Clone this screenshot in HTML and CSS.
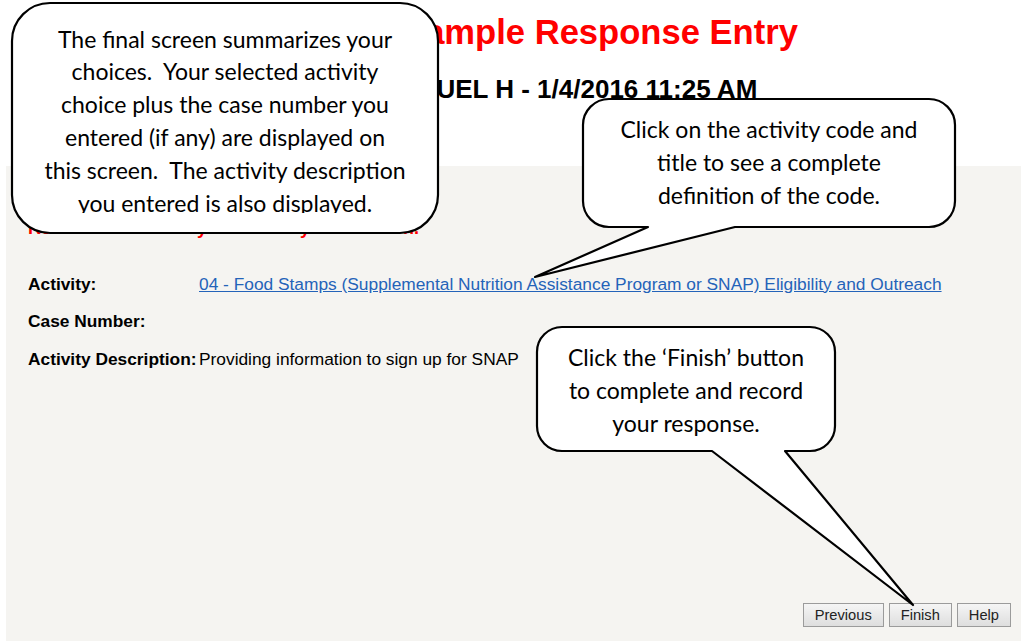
FILE: index.html
```html
<!DOCTYPE html>
<html lang="en">
<head>
<meta charset="utf-8">
<title>Sample Response Entry</title>
<link rel="stylesheet" href="styles.css">
</head>
<body>
<header class="head">
  <h1 class="title">Sample Response Entry</h1>
  <h2 class="sub">SAMUEL H - 1/4/2016 11:25 AM</h2>
</header>
<main class="panel">
  <p class="notice">Review the summary of the entry information.</p>
  <dl class="summary">
    <dt>Activity:</dt>
    <dd><a class="link" href="#">04 - Food Stamps (Supplemental Nutrition Assistance Program or SNAP) Eligibility and Outreach</a></dd>
    <dt>Case Number:</dt>
    <dd></dd>
    <dt>Activity Description:</dt>
    <dd>Providing information to sign up for SNAP</dd>
  </dl>
  <div class="actions">
    <button class="btn" type="button">Previous</button>
    <button class="btn" type="button">Finish</button>
    <button class="btn" type="button">Help</button>
  </div>
</main>

<div class="callout callout-summary">
  <svg class="shape" width="426" height="230" viewBox="0 0 426 230">
    <path d="M38,0 H388 A38,38 0 0 1 426,38 V192 A38,38 0 0 1 388,230 H38 A38,38 0 0 1 0,192 V38 A38,38 0 0 1 38,0 Z"/>
  </svg>
  <div class="callout-text clip">The final screen summarizes your<br>choices.&nbsp; Your selected activity<br>choice plus the case number you<br>entered (if any) are displayed on<br>this screen.&nbsp; The activity description<br>you entered is also displayed.</div>
</div>

<div class="callout callout-code">
  <svg class="shape" width="372" height="128" viewBox="0 0 372 128">
    <path d="M26,0 H346 A26,26 0 0 1 372,26 V102 A26,26 0 0 1 346,128 H152 L-48,178 L65,128 H26 A26,26 0 0 1 0,102 V26 A26,26 0 0 1 26,0 Z"/>
  </svg>
  <div class="callout-text">Click on the activity code and<br>title to see a complete<br>definition of the code.</div>
</div>

<div class="callout callout-finish">
  <svg class="shape" width="298" height="124" viewBox="0 0 298 124">
    <path d="M25,0 H273 A25,25 0 0 1 298,25 V99 A25,25 0 0 1 273,124 H248 L376,278 L175,124 H25 A25,25 0 0 1 0,99 V25 A25,25 0 0 1 25,0 Z"/>
  </svg>
  <div class="callout-text">Click the &lsquo;Finish&rsquo; button<br>to complete and record<br>your response.</div>
</div>
</body>
</html>
```
FILE: styles.css
```css
* { box-sizing: border-box; }
html, body { margin: 0; padding: 0; }
body {
  width: 1023px;
  height: 644px;
  overflow: hidden;
  position: relative;
  background: #ffffff;
  font-family: "Liberation Sans", Arial, sans-serif;
  color: #000;
}
.head { padding-top: 12px; }
.title {
  margin: 0;
  padding-left: 177px;
  text-align: center;
  color: #ff0000;
  font-size: 34.6px;
  line-height: 40px;
  font-weight: bold;
}
.sub {
  margin: 22px 0 0;
  padding-left: 113px;
  text-align: center;
  color: #000;
  font-size: 26px;
  line-height: 30px;
  font-weight: bold;
}
.panel {
  margin: 62px 2px 0 6px;
  height: 475px;
  background: #f5f4f1;
  padding: 51px 10px 14px 22px;
  display: flex;
  flex-direction: column;
}
.notice {
  margin: 0;
  color: #ff0000;
  font-weight: bold;
  font-size: 18px;
  line-height: 22px;
}
.summary {
  margin: 34.8px 0 0;
  display: grid;
  grid-template-columns: 171px 1fr;
  row-gap: 17.5px;
  font-size: 17.33px;
  line-height: 20px;
}
.summary dt { font-weight: bold; }
.summary dd { margin: 0; }
.link { color: #2463b9; text-decoration: underline; }
.actions {
  margin-top: auto;
  display: flex;
  justify-content: flex-end;
  gap: 5px;
}
.btn {
  height: 24px;
  padding: 0 11px;
  border: 1px solid #9b9b9b;
  background: linear-gradient(#f5f5f5, #dedede);
  font-family: "Liberation Sans", Arial, sans-serif;
  font-size: 14.67px;
  color: #222;
  line-height: 22px;
  border-radius: 0;
}

.callout { position: absolute; }
.callout .shape {
  position: absolute;
  left: 0;
  top: 0;
  overflow: visible;
}
.callout .shape path {
  fill: #ffffff;
  stroke: #000;
  stroke-width: 2.2;
  stroke-linejoin: round;
}
.callout-text {
  position: relative;
  text-align: center;
  font-family: Lato, "Open Sans", sans-serif;
  font-size: 23px;
  line-height: 33px;
  color: #000;
  white-space: nowrap;
}
.callout-summary { left: 12px; top: 3px; width: 426px; height: 230px; }
.callout-summary .callout-text {
  padding-top: 19.6px;
  height: 210px;
  overflow: hidden;
  line-height: 32.8px;
}
.callout-code { left: 583px; top: 99px; width: 372px; height: 128px; }
.callout-code .callout-text { padding-top: 13.6px; }
.callout-finish { left: 537px; top: 327px; width: 298px; height: 124px; }
.callout-finish .callout-text { padding-top: 13.6px; }
```
